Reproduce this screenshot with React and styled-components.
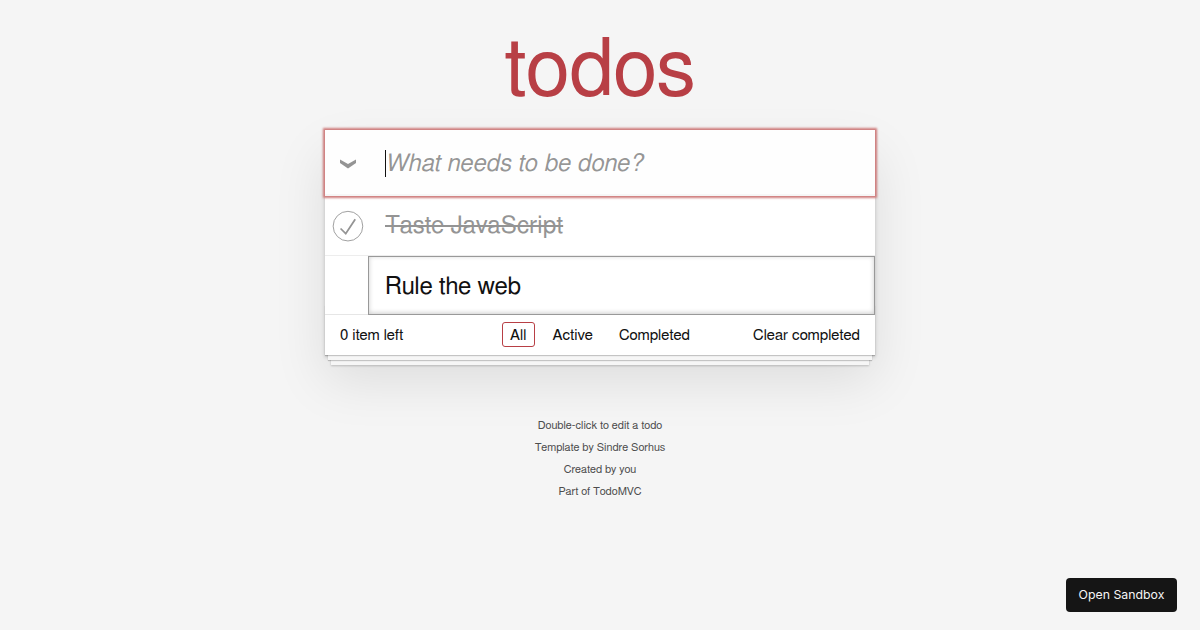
import React from "react";
import styled, { createGlobalStyle } from "styled-components";

const GlobalStyle = createGlobalStyle`
  html, body {
    margin: 0;
    padding: 0;
  }
  body {
    font: 14px FreeSans, "Liberation Sans", Arial, sans-serif;
    line-height: 1.4em;
    background: #f5f5f5;
    color: #111;
    min-height: 630px;
  }
  * {
    box-sizing: border-box;
  }
`;

const Page = styled.div`
  width: 550px;
  margin: 0 auto;
`;

const Title = styled.h1`
  height: 130px;
  margin: 0;
  padding-top: 16px;
  text-align: center;
  font-size: 80px;
  font-weight: 400;
  line-height: 110px;
  letter-spacing: 0.4px;
  color: #b83f45;
`;

const TodoApp = styled.section`
  position: relative;
  background: #fff;
  box-shadow: 0 2px 4px 0 rgba(0, 0, 0, 0.2), 0 25px 50px 0 rgba(0, 0, 0, 0.1);
`;

const Header = styled.header`
  position: relative;
  z-index: 2;
  height: 66px;
`;

const NewTodo = styled.input`
  display: block;
  width: 100%;
  height: 66px;
  padding: 17px 16px 15px 60px;
  border: 0;
  outline: 0;
  background: rgba(0, 0, 0, 0.003);
  font: inherit;
  font-size: 24px;
  line-height: 1.4em;
  color: #111;
  box-shadow: 0 0 2px 2px #cf7d7d, inset 0 -2px 1px rgba(0, 0, 0, 0.03);

  &::placeholder {
    font-style: italic;
    font-weight: 400;
    color: rgba(0, 0, 0, 0.42);
  }
`;

const Caret = styled.span`
  position: absolute;
  left: 60px;
  top: 20px;
  width: 1px;
  height: 27px;
  background: #111;
`;

const ToggleAll = styled.svg`
  position: absolute;
  left: 14px;
  top: 28px;
  width: 18px;
  height: 12px;
`;

const List = styled.ul`
  margin: 0;
  padding: 0;
  list-style: none;
`;

const Item = styled.li`
  display: flex;
  align-items: center;
  height: 60px;
  font-size: 24px;
  border-bottom: 1px solid #ededed;
`;

const Check = styled.svg`
  flex: none;
  width: 40px;
  height: 40px;
  margin: 0 15px 0 0;
`;

const ItemLabel = styled.label`
  padding: 2px 0 0 5px;
  line-height: 1.2;
  letter-spacing: 0.18px;
  color: #949494;
  text-decoration: line-through;
`;

const EditRow = styled.li`
  height: 58px;
`;

const EditInput = styled.input`
  position: relative;
  z-index: 1;
  display: block;
  width: 507px;
  height: 59px;
  margin: 0 0 0 43px;
  padding: 13px 16px 11px;
  border: 1px solid #999;
  outline: 0;
  font: inherit;
  font-size: 24px;
  line-height: 1.4em;
  letter-spacing: 0.17px;
  color: #111;
  background: #fff;
  box-shadow: inset 0 -1px 5px 0 rgba(0, 0, 0, 0.2);
`;

const Footer = styled.footer`
  position: relative;
  display: grid;
  grid-template-columns: 1fr auto 1fr;
  align-items: center;
  height: 41px;
  padding: 2px 15px 0;
  font-size: 15px;
  letter-spacing: 0.08px;
  border-top: 1px solid #e6e6e6;

  &::before {
    content: "";
    position: absolute;
    left: 0;
    right: 0;
    bottom: 0;
    height: 50px;
    overflow: hidden;
    pointer-events: none;
    box-shadow: 0 1px 1px rgba(0, 0, 0, 0.2), 0 8px 0 -3px #f6f6f6,
      0 9px 1px -3px rgba(0, 0, 0, 0.2), 0 16px 0 -6px #f6f6f6,
      0 17px 2px -6px rgba(0, 0, 0, 0.2);
  }
`;

const Filters = styled.ul`
  display: flex;
  gap: 4px;
  margin: 0;
  padding: 0;
  list-style: none;
`;

const Filter = styled.a`
  display: block;
  margin: 1px 3px 4px;
  padding: 3px 7px 1px;
  line-height: 19px;
  border: 1px solid ${(p) => (p.$selected ? "#b83f45" : "transparent")};
  border-radius: 3px;
  color: inherit;
  text-decoration: none;
  cursor: pointer;
`;

const ClearButton = styled.button`
  justify-self: end;
  padding: 0;
  border: 0;
  background: none;
  font: inherit;
  letter-spacing: inherit;
  color: inherit;
  cursor: pointer;
`;

const Info = styled.footer`
  margin-top: 60px;
  font-size: 11px;
  letter-spacing: 0.08px;
  color: #4d4d4d;
  text-align: center;
  text-shadow: 0 1px 0 rgba(255, 255, 255, 0.5);
`;

const InfoLine = styled.p`
  margin: 0;
  line-height: 22px;
`;

const SandboxLink = styled.a`
  position: fixed;
  right: 23px;
  bottom: 18px;
  width: 111px;
  height: 34px;
  display: flex;
  align-items: center;
  justify-content: center;
  border-radius: 4px;
  background: #151515;
  color: #f5f5f5;
  font-family: Inter, sans-serif;
  font-size: 12.3px;
  text-decoration: none;
`;

const filters = ["All", "Active", "Completed"];
const infoLines = [
  "Double-click to edit a todo",
  "Template by Sindre Sorhus",
  "Created by you",
  "Part of TodoMVC",
];

export default function App() {
  return (
    <>
      <GlobalStyle />
      <Page>
        <Title>todos</Title>
        <TodoApp>
          <Header>
            <NewTodo placeholder="What needs to be done?" readOnly />
            <Caret />
            <ToggleAll viewBox="0 0 18 12">
              <path d="M1 1.5L9 6l8-4.5v3.5L9 10.5 1 5z" fill="#949494" />
            </ToggleAll>
          </Header>
          <List>
            <Item>
              <Check viewBox="-10 -18 100 135">
                <circle cx="50" cy="50" r="50" fill="none" stroke="#949494" strokeWidth="3" />
                <path d="M72 25L42 71 27 56l-4 4 20 20 34-52z" fill="#949494" />
              </Check>
              <ItemLabel>Taste JavaScript</ItemLabel>
            </Item>
            <EditRow>
              <EditInput defaultValue="Rule the web" readOnly />
            </EditRow>
          </List>
          <Footer>
            <span>0 item left</span>
            <Filters>
              {filters.map((name, index) => (
                <li key={name}>
                  <Filter $selected={index === 0}>{name}</Filter>
                </li>
              ))}
            </Filters>
            <ClearButton>Clear completed</ClearButton>
          </Footer>
        </TodoApp>
        <Info>
          {infoLines.map((line) => (
            <InfoLine key={line}>{line}</InfoLine>
          ))}
        </Info>
      </Page>
      <SandboxLink>Open Sandbox</SandboxLink>
    </>
  );
}
